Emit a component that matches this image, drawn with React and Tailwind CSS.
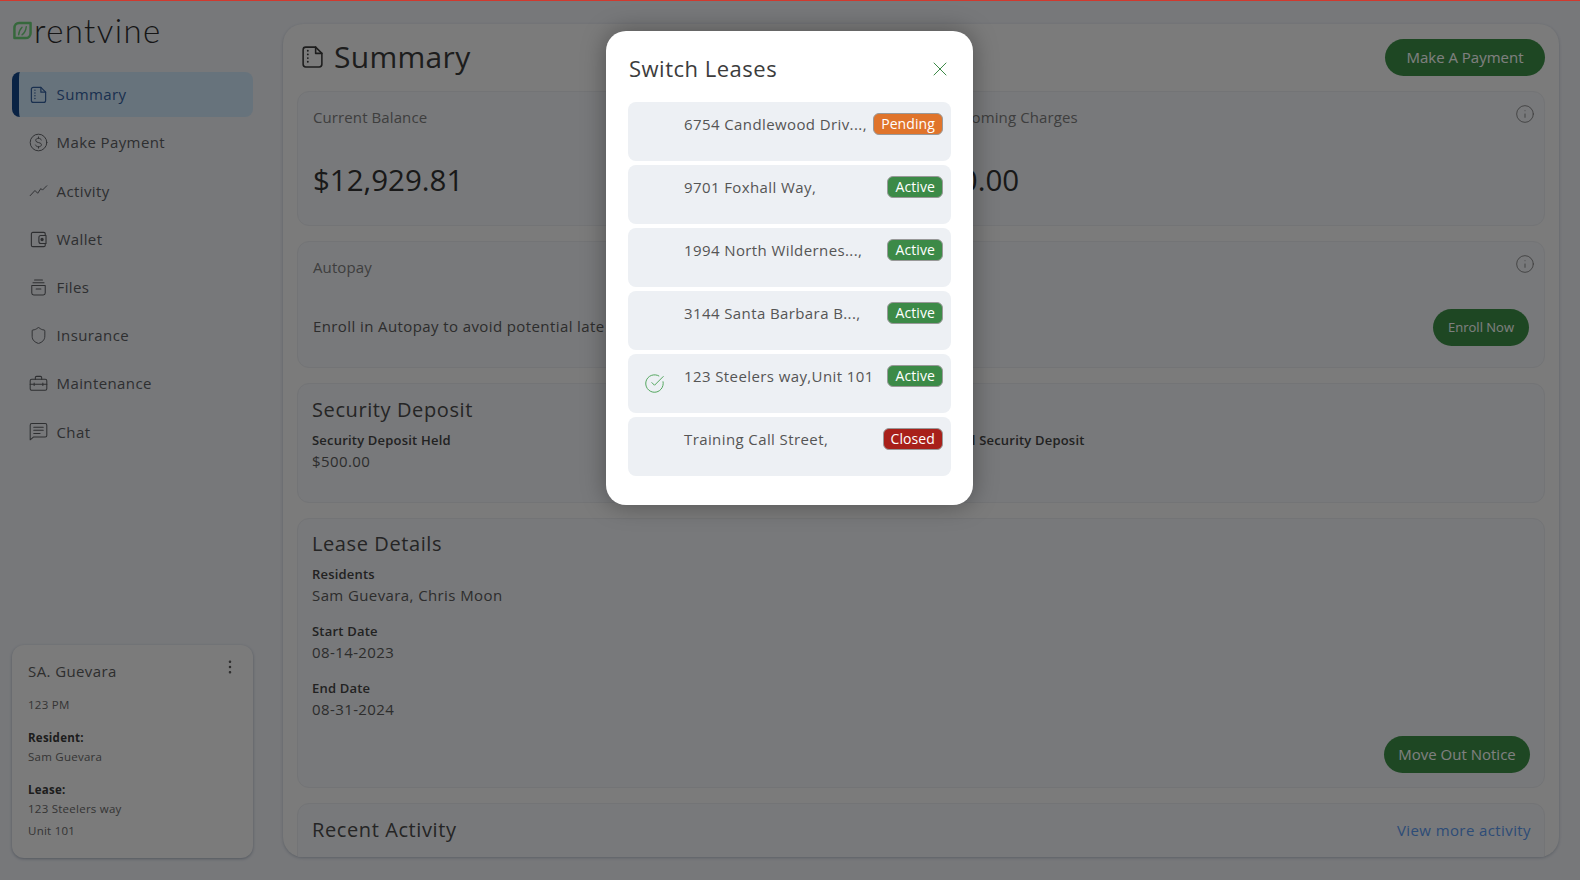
import React from "react";
import { Shield, X, Info, EllipsisVertical, CircleCheckBig } from "lucide-react";

const DocIcon = ({ className }) => (
  <svg viewBox="0 0 24 24" fill="none" stroke="currentColor" strokeWidth="1.5" strokeLinejoin="round" strokeLinecap="round" className={className}>
    <path d="M3 5.5C3 4 4 3 5.5 3H15l6 6v10.5c0 1.5-1 2.5-2.5 2.5h-13C4 22 3 21 3 19.5z" />
    <path d="M15 3v6h6" />
    <path d="M7.5 6.5v.01M7.5 10v.01M7.5 13.5v.01M7.5 17v.01" strokeWidth="1.8" />
  </svg>
);
const DollarIcon = ({ className }) => (
  <svg viewBox="0 0 24 24" fill="none" stroke="currentColor" strokeWidth="1.2" strokeLinecap="round" className={className}>
    <circle cx="12" cy="12" r="10.5" />
    <path d="M15.5 8.8C15 7.4 13.7 6.7 12 6.7c-2 0-3.5 1-3.5 2.7 0 3.8 7.2 1.7 7.2 5.3 0 1.7-1.6 2.7-3.7 2.7-1.8 0-3.2-.8-3.8-2.2M12 5v1.7M12 17.4v1.7" />
  </svg>
);
const TrendIcon = ({ className }) => (
  <svg viewBox="0 0 24 24" fill="none" stroke="currentColor" strokeWidth="1.2" strokeLinecap="round" strokeLinejoin="round" className={className}>
    <path d="M1.5 18.5l6-6.5 3.5 3.5 4-6 2 2 5.5-5.5" />
  </svg>
);
const WalletIcon = ({ className }) => (
  <svg viewBox="0 0 24 24" fill="none" stroke="currentColor" strokeWidth="1.4" strokeLinejoin="round" className={className}>
    <path d="M20.5 7V4.8c0-1-.7-1.8-1.8-1.8H4.8C3.7 3 3 3.8 3 4.8v14.4c0 1 .7 1.8 1.8 1.8h13.9c1.1 0 1.8-.8 1.8-1.8V17" />
    <path d="M21.5 7H15c-1.4 0-2.5 1.1-2.5 2.5v5c0 1.4 1.1 2.5 2.5 2.5h6.5z" />
    <circle cx="16.5" cy="12" r="1.4" fill="currentColor" />
  </svg>
);
const FilesIcon = ({ className }) => (
  <svg viewBox="0 0 24 24" fill="none" stroke="currentColor" strokeWidth="1.3" strokeLinecap="round" strokeLinejoin="round" className={className}>
    <path d="M7 2.5h10M5 6h14" />
    <path d="M3.5 9.5h17v9.5c0 1.4-1 2.5-2.5 2.5H6c-1.5 0-2.5-1.1-2.5-2.5z" />
    <path d="M9 14h6" />
  </svg>
);
const CaseIcon = ({ className }) => (
  <svg viewBox="0 0 24 24" fill="none" stroke="currentColor" strokeWidth="1.3" strokeLinecap="round" strokeLinejoin="round" className={className}>
    <rect x="1.5" y="6.5" width="21" height="14" rx="2" />
    <path d="M8 6.5V4.5c0-1 .7-1.5 1.5-1.5h5c.8 0 1.5.5 1.5 1.5v2" />
    <path d="M1.5 13h21M6.5 11.5v3M17.5 11.5v3" />
  </svg>
);
const ChatIcon = ({ className }) => (
  <svg viewBox="0 0 24 24" fill="none" stroke="currentColor" strokeWidth="1.3" strokeLinecap="round" strokeLinejoin="round" className={className}>
    <path d="M1.5 22.5V4c0-1.2.8-2 2-2h17c1.2 0 2 .8 2 2v13c0 1.2-.8 2-2 2H5.5z" />
    <path d="M6 6.5h12M6 10.5h12M6 14.5h8" />
  </svg>
);
const Leaf = () => (
  <svg viewBox="0 0 20 20" fill="none" className="h-[19px] w-[19px] shrink-0">
    <path d="M6.5 2H18.5V12.5c0 3-2 5.5-5.5 5.5H1.5V7.5C1.5 4 3.5 2 6.5 2z" stroke="#6cd078" strokeWidth="2.6" strokeLinejoin="round" />
    <path d="M6 14.5c.2-3.5 1.5-6 3.5-8M9.5 14.5C12 13 13.5 10 14 6" stroke="#6cd078" strokeWidth="1.5" strokeLinecap="round" />
  </svg>
);

const nav = [
  ["Summary", DocIcon],
  ["Make Payment", DollarIcon],
  ["Activity", TrendIcon],
  ["Wallet", WalletIcon],
  ["Files", FilesIcon],
  ["Insurance", Shield],
  ["Maintenance", CaseIcon],
  ["Chat", ChatIcon],
];

const leases = [
  ["6754 Candlewood Driv...,", "Pending", "bg-[#e0742b]", false],
  ["9701 Foxhall Way,", "Active", "bg-[#3c8a47]", false],
  ["1994 North Wildernes...,", "Active", "bg-[#3c8a47]", false],
  ["3144 Santa Barbara B...,", "Active", "bg-[#3c8a47]", false],
  ["123 Steelers way,Unit 101", "Active", "bg-[#3c8a47]", true],
  ["Training Call Street,", "Closed", "bg-[#a8201a]", false],
];

const Card = ({ className = "", children }) => (
  <div className={`shrink-0 rounded-xl border border-[#e6e8ec] bg-[#f0f2f6] ${className}`}>{children}</div>
);

const Field = ({ label, value, className = "" }) => (
  <div className={className}>
    <div className="text-[13px] leading-[21px] font-semibold tracking-[0.2px] text-[#444]">{label}</div>
    {value && <div className="text-[15px] leading-[20px] tracking-[0.4px] text-[#5a5a5a]">{value}</div>}
  </div>
);

const Pill = ({ children, className = "" }) => (
  <button className={`h-[37px] rounded-full bg-[#3c8f47] text-white ${className}`}>{children}</button>
);

const small = "text-[11.5px] leading-[18px] tracking-[0.25px]";

export default function App() {
  return (
    <div className="relative flex h-[880px] w-[1580px] flex-col overflow-hidden bg-[#eef0f5] text-[#555]" style={{ fontFamily: '"Open Sans", sans-serif' }}>
      <div className="relative z-10 h-[1px] shrink-0 bg-[#d0392e]" />
      <div className="flex min-h-0 flex-1">
        <aside className="flex w-[283px] shrink-0 flex-col pl-3 pr-[30px] pb-[22px]">
          <div className="flex h-[55px] items-center gap-[2px] pl-[1px] pt-[4px]">
            <Leaf />
            <span className="text-[33px] leading-none font-light tracking-[1.4px] text-[#2c2c2c]" style={{ fontFamily: "Lato, sans-serif" }}>rentvine</span>
          </div>
          <nav className="mt-[16px] flex flex-col gap-[3.2px]">
            {nav.map(([label, Icon], i) => (
              <div
                key={label}
                className={`flex h-[45px] items-center gap-[8.5px] rounded-lg text-[15px] tracking-[0.4px] ${
                  i === 0 ? "border-l-[7px] border-[#144688] bg-[#cfe6f8] pb-[1px] pl-[10px] text-[#34609f]" : "pl-[17px] text-[#5c5e62]"
                }`}
              >
                <Icon className="h-[19px] w-[19px] shrink-0" strokeWidth={1.2} />
                <span>{label}</span>
              </div>
            ))}
          </nav>
          <div className="mt-auto h-[213px] rounded-xl bg-[#f6f6f6] px-4 pt-[14px] shadow-[0_1px_3px_rgba(60,80,110,0.4)]">
            <div className="flex items-start justify-between">
              <span className="text-[15px] leading-[24px] tracking-[0.4px] text-[#5c5c5c]">SA. Guevara</span>
              <EllipsisVertical className="mr-[-2px] mt-[-1px] h-[18px] w-[18px] text-[#555]" strokeWidth={1.4} />
            </div>
            <div className={`mt-[13px] text-[#6a6a6a] ${small}`}>123 PM</div>
            <div className={`mt-[15px] font-bold text-[#3a3a3a] ${small}`}>Resident:</div>
            <div className={`mt-[1px] text-[#6a6a6a] ${small}`}>Sam Guevara</div>
            <div className={`mt-[15px] font-bold text-[#3a3a3a] ${small}`}>Lease:</div>
            <div className={`mt-[1px] text-[#6a6a6a] ${small}`}>123 Steelers way</div>
            <div className={`mt-[4px] text-[#6a6a6a] ${small}`}>Unit 101</div>
          </div>
        </aside>

        <main className="mt-[23px] mb-[23px] mr-[21px] flex min-w-0 flex-1 flex-col overflow-hidden rounded-[20px] bg-[#f6f6f6] pl-[14px] pr-[14px] pt-[15px] shadow-[0_1px_3px_rgba(60,80,110,0.3)]">
          <div className="mb-[15px] flex h-[37px] shrink-0 items-center justify-between">
            <div className="flex items-center gap-[9px] pb-[2px] pl-[3px] text-[#3a3a3a]">
              <DocIcon className="h-[25px] w-[25px]" />
              <h1 className="text-[30px] leading-[37px] tracking-[0.3px]">Summary</h1>
            </div>
            <Pill className="w-[160px] text-[15px]">Make A Payment</Pill>
          </div>

          <div className="flex flex-col gap-[15px]">
            <Card className="grid h-[135px] grid-cols-2 pl-[15px] pr-[9px] pt-[13px]">
              <div>
                <div className="text-[15px] leading-[24px] tracking-[0.1px] text-[#7d7d7d]">Current Balance</div>
                <div className="mt-[31px] text-[29.5px] leading-[40px] text-[#333]">$12,929.81</div>
              </div>
              <div className="pl-[20px]">
                <div className="flex items-start justify-between">
                  <div className="text-[15px] leading-[24px] tracking-[0.1px] text-[#7d7d7d]">Upcoming Charges</div>
                  <Info className="mt-[-1px] h-[20px] w-[20px] text-[#777]" strokeWidth={1} />
                </div>
                <div className="mt-[31px] text-[29.5px] leading-[40px] text-[#333]">$0.00</div>
              </div>
            </Card>

            <Card className="flex h-[127px] flex-col pl-[15px] pr-[15px] pt-[13px]">
              <div className="flex items-start justify-between">
                <div className="text-[15px] leading-[24px] tracking-[0.1px] text-[#7d7d7d]">Autopay</div>
                <Info className="mr-[-6px] mt-[-1px] h-[20px] w-[20px] text-[#777]" strokeWidth={1} />
              </div>
              <div className="mt-[30px] flex items-center justify-between">
                <div className="pb-[2px] text-[15px] tracking-[0.4px] text-[#5a5a5a]">Enroll in Autopay to avoid potential late fees and missed payments.</div>
                <Pill className="w-[96px] text-[13px]">Enroll Now</Pill>
              </div>
            </Card>

            <Card className="h-[120px] pl-[14px] pt-[11px]">
              <h2 className="text-[20px] leading-[30px] tracking-[0.6px] text-[#4a4a4a]">Security Deposit</h2>
              <div className="mt-[5px] grid grid-cols-2">
                <Field label="Security Deposit Held" value="$500.00" />
                <Field label="Total Security Deposit" className="pl-[15px]" />
              </div>
            </Card>

            <Card className="flex h-[270px] flex-col pl-[14px] pr-[14px] pt-[10px]">
              <h2 className="text-[20px] leading-[30px] tracking-[0.6px] text-[#4a4a4a]">Lease Details</h2>
              <Field label="Residents" value="Sam Guevara, Chris Moon" className="mt-[5px]" />
              <Field label="Start Date" value="08-14-2023" className="mt-[16px]" />
              <Field label="End Date" value="08-31-2024" className="mt-[16px]" />
              <div className="mt-auto flex justify-end pb-[14px]">
                <Pill className="w-[146px] text-[15px]">Move Out Notice</Pill>
              </div>
            </Card>

            <Card className="flex h-[70px] items-start justify-between pl-[14px] pr-[13px] pt-[11px]">
              <h2 className="text-[20px] leading-[30px] tracking-[0.6px] text-[#4a4a4a]">Recent Activity</h2>
              <span className="pt-[3px] text-[15px] leading-[24px] tracking-[0.4px] text-[#5a98ee]">View more activity</span>
            </Card>
          </div>
        </main>
      </div>

      <div className="absolute inset-0 flex justify-center bg-black/50 pt-[31px]">
        <div className="mr-[1px] h-[474px] w-[367px] rounded-[20px] bg-white pl-[22px] pr-[22px] pt-[21px] shadow-[0_0_25px_rgba(0,0,0,0.35)]">
          <div className="flex h-[32px] items-center justify-between pl-[1px]">
            <h2 className="text-[22px] tracking-[0.5px] text-[#3c3c3c]">Switch Leases</h2>
            <X className="mr-[-1px] mt-[1px] h-[24px] w-[24px] text-[#3c8a47]" strokeWidth={1} />
          </div>
          <div className="mt-[18px] flex flex-col gap-[4px]">
            {leases.map(([addr, status, color, selected]) => (
              <div key={addr} className="flex h-[59px] rounded-lg bg-[#edf0f4] pr-2">
                <div className="flex w-[56px] shrink-0 items-center justify-center pr-[3px]">
                  {selected && <CircleCheckBig className="h-[21px] w-[21px] text-[#4ea35a]" strokeWidth={1.1} />}
                </div>
                <div className="mt-[10.5px] flex h-[22px] flex-1 items-center justify-between">
                  <span className="whitespace-nowrap pt-[2px] text-[15px] tracking-[0.4px] text-[#555]">{addr}</span>
                  <span className={`flex h-[22px] items-center rounded-md border border-[#999] px-[7px] text-[14px] tracking-[0.1px] text-white ${color}`}>{status}</span>
                </div>
              </div>
            ))}
          </div>
        </div>
      </div>
    </div>
  );
}
